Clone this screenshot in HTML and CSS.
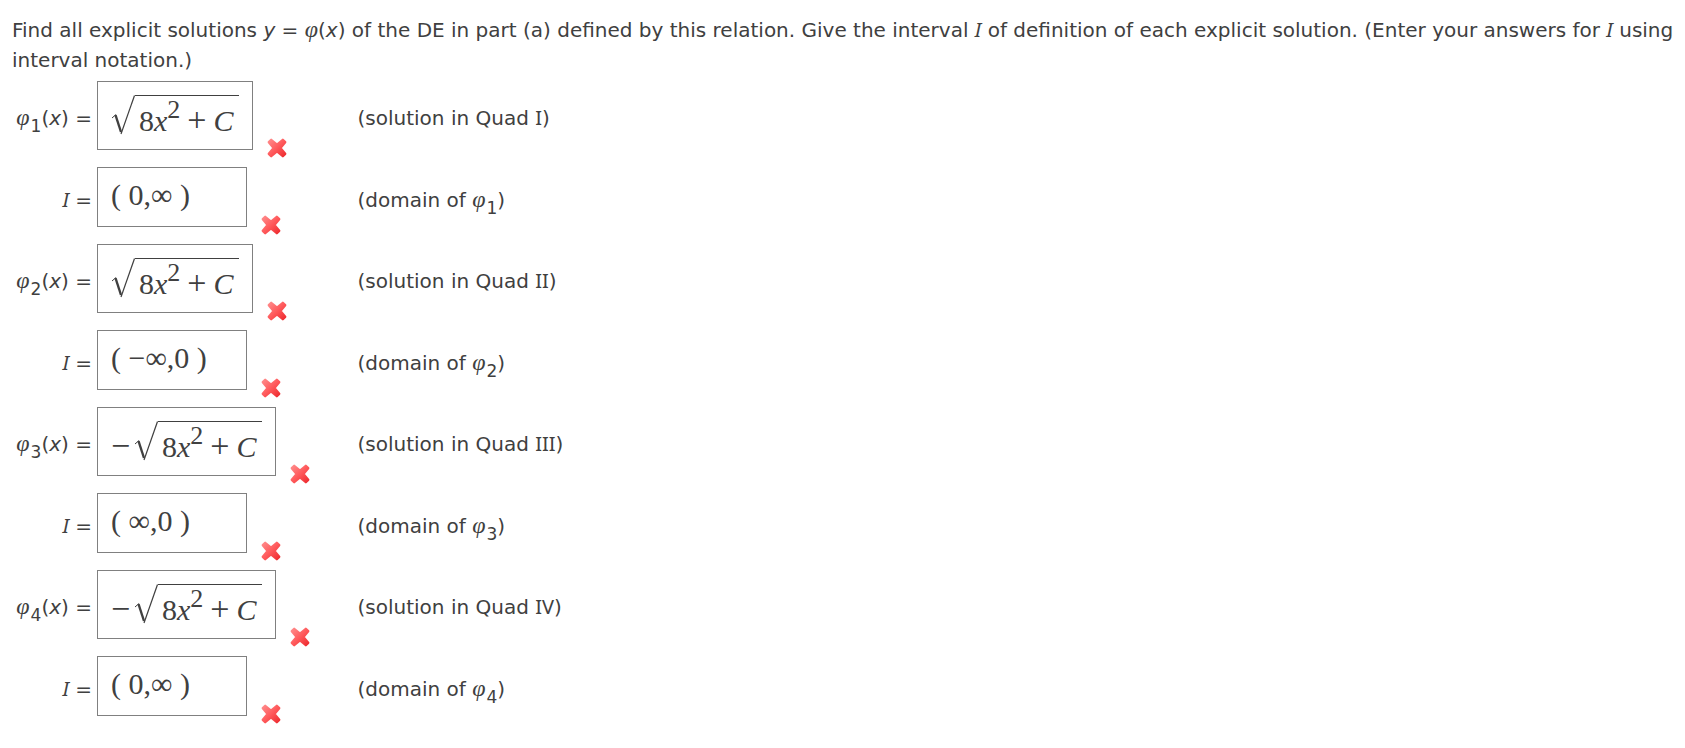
FILE: index.html
```
<!DOCTYPE html>
<html lang="en">

<head>
    <meta charset="UTF-8">
    <meta name="viewport" content="width=device-width, initial-scale=1.0">
    <title>Explicit solutions</title>
    <link rel="stylesheet" href="styles.css">
</head>

<body>
    <!-- shared drawings -->
    <svg class="defs" width="0" height="0" aria-hidden="true">
        <defs>
            <linearGradient id="red" x1="0" y1="0" x2="1" y2="1">
                <stop offset="0" stop-color="#ff8a8a" />
                <stop offset="0.5" stop-color="#ff5a5c" />
                <stop offset="1" stop-color="#ee2c30" />
            </linearGradient>
            <symbol id="wrong" viewBox="0 0 20 20">
                <path fill="url(#red)" stroke="url(#red)" stroke-width="2.400" stroke-linejoin="round" d="M4.200 1.800 L10 6.600 L15.800 1.800 L18.200 4.200 L13.400 10 L18.200 15.800 L15.800 18.200 L10 13.400 L4.200 18.200 L1.800 15.800 L6.600 10 L1.800 4.200 Z" />
            </symbol>
            <symbol id="radical" viewBox="0 0 24 40">
                <path fill="none" stroke="#404040" stroke-width="1" d="M1 23 L5 19.500" />
                <path fill="none" stroke="#404040" stroke-width="2.400" d="M4.500 20 L10 37" />
                <path fill="none" stroke="#404040" stroke-width="1.200" d="M10 39 L23.500 0.500" />
            </symbol>
        </defs>
    </svg>

    <div class="question">
        <p class="prompt">Find all explicit solutions <i>y</i> = <i class="phi">φ</i>(<i>x</i>) of the DE in part (a) defined by this relation. Give the interval <i class="cap">I</i> of definition of each explicit solution. (Enter your answers for <i class="cap">I</i> using interval notation.)</p>

        <table class="answers">
            <tr class="row_phi">
                <th class="label" id="phi_1"><i class="phi">φ</i><sub>1</sub>(<i>x</i>) =</th>
                <td>
                    <div class="answer">
                        <div class="box" role="textbox" tabindex="0" aria-labelledby="phi_1"><svg class="radical"><use href="#radical" /></svg><span class="root">8<i>x</i><sup>2</sup><span class="plus">+</span><i>C</i></span></div>
                        <svg class="wrong"><use href="#wrong" /></svg>
                    </div>
                </td>
                <td class="note">(solution in Quad <span class="cap">I</span>)</td>
            </tr>
            <tr class="row_int">
                <th class="label"><label for="int_1"><i class="cap">I</i> =</label></th>
                <td>
                    <div class="answer">
                        <input class="box" id="int_1" type="text" value="( 0,∞ )">
                        <svg class="wrong"><use href="#wrong" /></svg>
                    </div>
                </td>
                <td class="note">(domain of <i class="phi">φ</i><sub>1</sub>)</td>
            </tr>
            <tr class="row_phi">
                <th class="label" id="phi_2"><i class="phi">φ</i><sub>2</sub>(<i>x</i>) =</th>
                <td>
                    <div class="answer">
                        <div class="box" role="textbox" tabindex="0" aria-labelledby="phi_2"><svg class="radical"><use href="#radical" /></svg><span class="root">8<i>x</i><sup>2</sup><span class="plus">+</span><i>C</i></span></div>
                        <svg class="wrong"><use href="#wrong" /></svg>
                    </div>
                </td>
                <td class="note">(solution in Quad <span class="cap">II</span>)</td>
            </tr>
            <tr class="row_int">
                <th class="label"><label for="int_2"><i class="cap">I</i> =</label></th>
                <td>
                    <div class="answer">
                        <input class="box" id="int_2" type="text" value="( −∞,0 )">
                        <svg class="wrong"><use href="#wrong" /></svg>
                    </div>
                </td>
                <td class="note">(domain of <i class="phi">φ</i><sub>2</sub>)</td>
            </tr>
            <tr class="row_phi">
                <th class="label" id="phi_3"><i class="phi">φ</i><sub>3</sub>(<i>x</i>) =</th>
                <td>
                    <div class="answer">
                        <div class="box" role="textbox" tabindex="0" aria-labelledby="phi_3"><span class="minus">−</span><svg class="radical"><use href="#radical" /></svg><span class="root">8<i>x</i><sup>2</sup><span class="plus">+</span><i>C</i></span></div>
                        <svg class="wrong"><use href="#wrong" /></svg>
                    </div>
                </td>
                <td class="note">(solution in Quad <span class="cap">III</span>)</td>
            </tr>
            <tr class="row_int">
                <th class="label"><label for="int_3"><i class="cap">I</i> =</label></th>
                <td>
                    <div class="answer">
                        <input class="box" id="int_3" type="text" value="( ∞,0 )">
                        <svg class="wrong"><use href="#wrong" /></svg>
                    </div>
                </td>
                <td class="note">(domain of <i class="phi">φ</i><sub>3</sub>)</td>
            </tr>
            <tr class="row_phi">
                <th class="label" id="phi_4"><i class="phi">φ</i><sub>4</sub>(<i>x</i>) =</th>
                <td>
                    <div class="answer">
                        <div class="box" role="textbox" tabindex="0" aria-labelledby="phi_4"><span class="minus">−</span><svg class="radical"><use href="#radical" /></svg><span class="root">8<i>x</i><sup>2</sup><span class="plus">+</span><i>C</i></span></div>
                        <svg class="wrong"><use href="#wrong" /></svg>
                    </div>
                </td>
                <td class="note">(solution in Quad <span class="cap">IV</span>)</td>
            </tr>
            <tr class="row_int">
                <th class="label"><label for="int_4"><i class="cap">I</i> =</label></th>
                <td>
                    <div class="answer">
                        <input class="box" id="int_4" type="text" value="( 0,∞ )">
                        <svg class="wrong"><use href="#wrong" /></svg>
                    </div>
                </td>
                <td class="note">(domain of <i class="phi">φ</i><sub>4</sub>)</td>
            </tr>
        </table>
    </div>
</body>

</html>
```
FILE: styles.css
```
body {
    margin: 0px;
    background-color: #fff;
    color: #404040;
    font-family: Verdana, "DejaVu Sans", sans-serif;
    font-size: 20px;
    line-height: 30px;
}

.defs {
    position: absolute;
}

.question {
    padding: 15px 4px 15px 12px;
}

.prompt {
    margin: 0px;
}

.phi {
    font-family: "Liberation Serif", serif;
    font-size: 24px;
    line-height: 20px;
}

/*带衬线的大写I*/
.cap {
    font-family: Verdana, "Noto Sans", sans-serif;
    line-height: 20px;
}

sub {
    padding-left: 1px;
    font-size: 17px;
    line-height: 10px;
    vertical-align: -7px;
}

.answers {
    border-collapse: collapse;
}

.answers th,
.answers td {
    padding: 0px;
    font-weight: normal;
    text-align: left;
}

.answers .label {
    width: 80px;
    padding-right: 5px;
    text-align: right;
    white-space: nowrap;
}

.answers .note {
    padding-left: 48px;
}

.row_phi {
    height: 86px;
}

.row_int {
    height: 77px;
}

/*输入框和右下角的错误标记*/
.answer {
    display: flex;
    align-items: flex-end;
    padding: 6px 0px 11px;
}

.box {
    box-sizing: border-box;
    border: 1px solid #808080;
    background-color: #fff;
    color: #404040;
    font-family: "Liberation Serif", serif;
    font-size: 30px;
}

div.box {
    display: flex;
    height: 69px;
    padding: 13px 13px 0px;
}

input.box {
    width: 150px;
    height: 60px;
    padding: 0px 13px 4px;
}

.wrong {
    width: 20px;
    height: 20px;
    margin: 0px 0px -8px 14px;
}

.radical {
    width: 24px;
    height: 40px;
}

.root {
    height: 40px;
    padding: 0px 5px 0px 4px;
    border-top: 1px solid #404040;
    line-height: 50px;
    white-space: nowrap;
}

.root sup {
    font-size: 26px;
    line-height: 10px;
    vertical-align: 13px;
}

.plus {
    padding: 0px 7px;
    font-size: 34px;
    line-height: 30px;
}

.minus {
    width: 23px;
    font-size: 34px;
    line-height: 50px;
}
```
